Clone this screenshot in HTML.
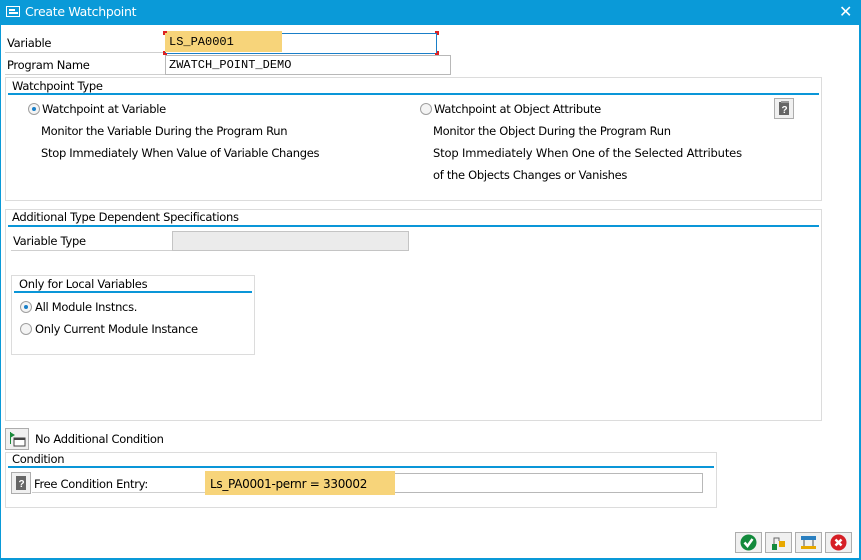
<!DOCTYPE html>
<html><head><style>
*{margin:0;padding:0;box-sizing:border-box}
body{width:861px;height:560px;background:#fff;position:relative;overflow:hidden;font-family:"DejaVu Sans","Liberation Sans",sans-serif;font-size:11.5px;color:#000;letter-spacing:-0.3px}
.a{position:absolute;white-space:nowrap}
.box{position:absolute;border:1px solid #dcdcdc}
.bl{position:absolute;height:2px;background:#0a96d8}
.in{position:absolute;border:1px solid #b8b8b8;background:#fff;font-family:"Liberation Mono",monospace;font-size:12px;letter-spacing:0;padding-left:3px;line-height:18px}
.rad{position:absolute;width:12px;height:12px;border:1px solid #a0a0a0;border-radius:50%;background:#f4f4f4}
.rad.on::after{content:"";position:absolute;left:3px;top:3px;width:4px;height:4px;border-radius:50%;background:#1a7fc8}
.btn{position:absolute;border:1px solid #adadad;background:#f0f0f0}
.ul{position:absolute;height:1px;background:#cfcfcf}
.c{position:absolute;width:4px;height:4px;border-color:#d22;border-style:solid;border-width:0}
</style></head><body>
<div class="a" style="left:0;top:0;width:861px;height:25px;background:#0a9ad8"></div>
<div class="a" style="left:0;top:25px;width:1px;height:535px;background:#0a9ad8"></div>
<div class="a" style="left:859px;top:25px;width:2px;height:535px;background:#0a9ad8"></div>
<div class="a" style="left:0;top:558px;width:861px;height:2px;background:#0a9ad8"></div>
<svg class="a" style="left:6px;top:5px" width="14" height="13"><rect x="0.5" y="1.5" width="13" height="10" fill="none" stroke="#fff"/><rect x="3" y="4" width="6" height="2" fill="#fff"/><rect x="3" y="7" width="9" height="2" fill="#fff"/></svg>
<div class="a" style="left:25px;top:4px;color:#fff;font-size:12.5px">Create Watchpoint</div>
<div class="a" style="left:839px;top:2px;color:#fff;font-size:16px">✕</div>

<div class="a" style="left:7px;top:36px">Variable</div>
<div class="ul" style="left:5px;top:52px;width:160px"></div>
<div class="in" style="left:165px;top:33px;width:272px;height:21px;border-color:#1a7fc8"></div>
<div class="a" style="left:165px;top:31px;width:117px;height:21px;background:#f7d47a"></div>
<div class="a" style="left:169px;top:35px;font-family:'Liberation Mono',monospace;font-size:12px;letter-spacing:0">LS_PA0001</div>
<div class="c" style="left:163px;top:31px;border-left-width:2px;border-top-width:2px"></div>
<div class="c" style="left:163px;top:51px;border-left-width:2px;border-bottom-width:2px"></div>
<div class="c" style="left:435px;top:31px;border-right-width:2px;border-top-width:2px"></div>
<div class="c" style="left:435px;top:51px;border-right-width:2px;border-bottom-width:2px"></div>
<div class="a" style="left:7px;top:58px">Program Name</div>
<div class="ul" style="left:5px;top:74px;width:160px"></div>
<div class="in" style="left:165px;top:55px;width:286px;height:20px">ZWATCH_POINT_DEMO</div>

<div class="box" style="left:5px;top:77px;width:817px;height:124px"></div>
<div class="a" style="left:12px;top:79px">Watchpoint Type</div>
<div class="bl" style="left:8px;top:93px;width:811px"></div>
<div class="rad on" style="left:28px;top:103px"></div>
<div class="a" style="left:42px;top:102px">Watchpoint at Variable</div>
<div class="a" style="left:41px;top:124px">Monitor the Variable During the Program Run</div>
<div class="a" style="left:41px;top:146px">Stop Immediately When Value of Variable Changes</div>
<div class="rad" style="left:420px;top:103px"></div>
<div class="a" style="left:434px;top:102px">Watchpoint at Object Attribute</div>
<div class="a" style="left:433px;top:124px">Monitor the Object During the Program Run</div>
<div class="a" style="left:433px;top:146px;letter-spacing:-0.15px">Stop Immediately When One of the Selected Attributes</div>
<div class="a" style="left:433px;top:168px">of the Objects Changes or Vanishes</div>
<div class="btn" style="left:774px;top:98px;width:20px;height:21px"><svg width="18" height="19"><rect x="4" y="3" width="10" height="13" fill="#666"/><rect x="6" y="2" width="8" height="2" fill="#999"/><text x="6.5" y="14" font-size="10" font-weight="bold" fill="#fff" font-family="Liberation Sans">?</text></svg></div>

<div class="box" style="left:5px;top:209px;width:817px;height:212px"></div>
<div class="a" style="left:12px;top:210px">Additional Type Dependent Specifications</div>
<div class="bl" style="left:8px;top:225px;width:811px"></div>
<div class="a" style="left:13px;top:234px">Variable Type</div>
<div class="ul" style="left:11px;top:250px;width:162px"></div>
<div class="a" style="left:172px;top:231px;width:237px;height:20px;background:#ebebeb;border:1px solid #c4c4c4"></div>

<div class="box" style="left:11px;top:275px;width:244px;height:80px"></div>
<div class="a" style="left:19px;top:277px">Only for Local Variables</div>
<div class="bl" style="left:14px;top:291px;width:238px"></div>
<div class="rad on" style="left:20px;top:301px"></div>
<div class="a" style="left:35px;top:300px">All Module Instncs.</div>
<div class="rad" style="left:20px;top:323px"></div>
<div class="a" style="left:35px;top:322px">Only Current Module Instance</div>

<div class="btn" style="left:5px;top:428px;width:24px;height:22px"><svg width="22" height="20"><rect x="8" y="9" width="11" height="8" fill="#fff" stroke="#444"/><rect x="8" y="9" width="11" height="2" fill="#444"/><path d="M4 3 L9 6 L4 9 Z" fill="#1a8a3a"/><rect x="4" y="3" width="1" height="12" fill="#1a8a3a"/></svg></div>
<div class="a" style="left:35px;top:432px">No Additional Condition</div>

<div class="box" style="left:5px;top:452px;width:712px;height:56px"></div>
<div class="a" style="left:12px;top:452px">Condition</div>
<div class="bl" style="left:8px;top:466px;width:706px"></div>
<div class="btn" style="left:11px;top:472px;width:20px;height:22px"><svg width="18" height="20"><rect x="4" y="3" width="10" height="14" fill="#666"/><text x="6.5" y="14" font-size="10" font-weight="bold" fill="#fff" font-family="Liberation Sans">?</text></svg></div>
<div class="a" style="left:34px;top:477px">Free Condition Entry:</div>
<div class="ul" style="left:32px;top:492px;width:173px"></div>
<div class="in" style="left:205px;top:473px;width:498px;height:20px"></div>
<div class="a" style="left:205px;top:471px;width:190px;height:24px;background:#f7d47a"></div>
<div class="a" style="left:210px;top:477px;font-size:12px">Ls_PA0001-pernr = 330002</div>

<div class="btn" style="left:735px;top:532px;width:27px;height:21px"><svg width="25" height="19"><circle cx="12.5" cy="9.5" r="8" fill="#138a3c"/><path d="M8.5 9.5 L11.5 13 L16.5 6" stroke="#fff" stroke-width="2.5" fill="none"/></svg></div>
<div class="btn" style="left:765px;top:532px;width:27px;height:21px"><svg width="25" height="19"><rect x="6" y="11" width="5" height="6" fill="#138a3c"/><rect x="13" y="8" width="6" height="6" fill="#e8a800"/><path d="M8 11 V5 H13 V8" stroke="#666" fill="none"/></svg></div>
<div class="btn" style="left:795px;top:532px;width:27px;height:21px"><svg width="25" height="19"><rect x="5" y="3" width="15" height="4" fill="#2a7fc0"/><rect x="5" y="13" width="15" height="3" fill="#e8a800"/><path d="M8 7 V13 M17 7 V13" stroke="#555"/></svg></div>
<div class="btn" style="left:825px;top:532px;width:27px;height:21px"><svg width="25" height="19"><circle cx="12.5" cy="9.5" r="8" fill="#d61f26"/><path d="M9.5 6.5 L15.5 12.5 M15.5 6.5 L9.5 12.5" stroke="#fff" stroke-width="2.5"/></svg></div>
</body></html>
